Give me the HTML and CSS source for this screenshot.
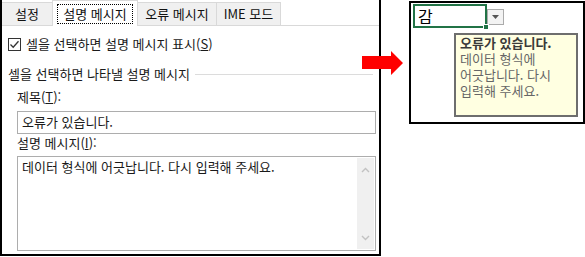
FILE: index.html
```html
<!DOCTYPE html>
<html lang="ko">
<head>
    <meta charset="UTF-8">
    <title>데이터 유효성 - 설명 메시지</title>
    <link rel="stylesheet" href="styles.css">
</head>
<body>
    <div class="page">
        <div class="dialog">
            <div class="tabs">
                <div class="tab tab-1">설정</div>
                <div class="tab tab-2 active"><span class="focus">설명 메시지</span></div>
                <div class="tab tab-3">오류 메시지</div>
                <div class="tab tab-4">IME 모드</div>
            </div>
            <div class="content">
                <label class="check-row">
                    <span class="checkbox">
                        <svg width="11" height="11" viewBox="0 0 11 11"><path d="M1.5 5.5 L4.2 8.2 L9.5 2.2" fill="none" stroke="#333" stroke-width="1.3"/></svg>
                    </span>
                    <span>셀을 선택하면 설명 메시지 표시(<u>S</u>)</span>
                </label>
                <div class="group-title">
                    <span>셀을 선택하면 나타낼 설명 메시지</span>
                    <span class="rule"></span>
                </div>
                <div class="field-label">제목(<u>T</u>):</div>
                <div class="textbox">오류가 있습니다.</div>
                <div class="field-label msg-label">설명 메시지(<u>I</u>):</div>
                <div class="textarea">
                    <div class="textarea-text">데이터 형식에 어긋납니다. 다시 입력해 주세요.</div>
                    <div class="scrollbar">
                        <svg width="9" height="6" viewBox="0 0 9 6"><path d="M1 5 L4.5 1.5 L8 5" fill="none" stroke="#c2c2c2" stroke-width="1.4"/></svg>
                        <svg width="9" height="6" viewBox="0 0 9 6"><path d="M1 1 L4.5 4.5 L8 1" fill="none" stroke="#c2c2c2" stroke-width="1.4"/></svg>
                    </div>
                </div>
            </div>
        </div>

        <svg class="arrow" width="42" height="26" viewBox="0 0 42 26">
            <polygon points="0,5 29,5 29,0 41,12 29,24 29,18 0,18" fill="#ff0000"/>
        </svg>

        <div class="sheet">
            <div class="cell-row">
                <div class="cell">감<span class="handle"></span></div>
                <div class="dropdown">
                    <svg width="7" height="4" viewBox="0 0 7 4"><polygon points="0,0 7,0 3.5,4" fill="#555"/></svg>
                </div>
            </div>
            <div class="tip">
                <div class="tip-title">오류가 있습니다.</div>
                <div class="tip-body">데이터 형식에<br>어긋납니다. 다시<br>입력해 주세요.</div>
            </div>
        </div>
    </div>
</body>
</html>
```

FILE: styles.css
```css
body {
    margin: 0;
    background: #fff;
    font-family: "Noto Sans CJK KR", "Noto Sans", sans-serif;
    font-size: 13px;
    line-height: 16px;
    color: #1a1a1a;
}
.page {
    position: relative;
    display: flex;
    align-items: flex-start;
    width: 585px;
    height: 257px;
}

/* --- 대화상자 --- */
.dialog {
    box-sizing: border-box;
    width: 381px;
    height: 256px;
    border-left: 2px solid #000;
    border-right: 2px solid #000;
    border-bottom: 2px solid #000;
    display: flex;
    flex-direction: column;
}
.tabs {
    display: flex;
    align-items: flex-end;
    height: 25px;
    border-bottom: 1px solid #d9d9d9;
}
.tab {
    box-sizing: border-box;
    height: 23px;
    line-height: 21px;
    text-align: center;
    background: #f0f0f0;
    border: 1px solid #d9d9d9;
    border-bottom: none;
    margin-left: -1px;
    color: #111;
    white-space: nowrap;
}
.tab-1 { width: 51px; margin-left: 0; border-left: none; }
.tab-2 { width: 86px; }
.tab-3 { width: 80px; }
.tab-4 { width: 65px; }
.tab.active {
    height: 26px;
    margin-bottom: -1px;
    background: #fff;
    padding: 3px 4px 0;
    line-height: 17px;
    position: relative;
    z-index: 1;
}
.focus {
    display: block;
    padding: 0 0 1px;
    border: 1px dotted #000;
}
.content {
    display: flex;
    flex-direction: column;
    padding: 10px 4px 0 6px;
}
.check-row {
    display: flex;
    align-items: center;
    gap: 5px;
    height: 16px;
}
.checkbox {
    box-sizing: border-box;
    width: 13px;
    height: 13px;
    border: 1px solid #333;
    display: flex;
    align-items: center;
    justify-content: center;
    background: #fff;
}
.group-title {
    display: flex;
    align-items: center;
    margin-top: 14px;
    height: 16px;
}
.group-title .rule {
    flex: 1;
    height: 1px;
    background: #dcdcdc;
    margin: 1px 2px 0 5px;
}
.field-label {
    margin-top: 7px;
    padding-left: 9px;
    height: 16px;
}
.field-label.msg-label { margin-top: 1px; }
.textbox {
    box-sizing: border-box;
    margin: 6px 0 0 9px;
    width: 359px;
    height: 23px;
    border: 1px solid #adadad;
    padding: 2px 4px;
}
.textarea {
    box-sizing: border-box;
    display: flex;
    margin: 5px 0 0 9px;
    width: 359px;
    height: 95px;
    border: 1px solid #adadad;
}
.textarea-text {
    flex: 1;
    padding: 2px 4px;
}
.scrollbar {
    width: 17px;
    background: #f0f0f0;
    display: flex;
    flex-direction: column;
    justify-content: space-between;
    align-items: center;
    padding: 9px 0 8px;
    margin: 1px 1px 1px 0;
}

/* --- 화살표 --- */
.arrow {
    position: absolute;
    left: 362px;
    top: 51px;
}

/* --- 워크시트 미리보기 --- */
.sheet {
    box-sizing: border-box;
    margin: 1px 0 0 28px;
    width: 176px;
    height: 123px;
    border: 2px solid #000;
    padding: 1px 0 0 2px;
}
.cell-row {
    display: flex;
    align-items: flex-start;
}
.cell {
    position: relative;
    box-sizing: border-box;
    width: 74px;
    height: 24px;
    border: 2px solid #217346;
    padding-left: 3px;
    font-size: 16px;
    line-height: 20px;
    color: #000;
}
.handle {
    position: absolute;
    right: -4px;
    bottom: -4px;
    width: 4px;
    height: 4px;
    background: #217346;
    border: 1px solid #fff;
}
.dropdown {
    box-sizing: border-box;
    margin-top: 5px;
    width: 17px;
    height: 16px;
    border: 1px solid #ababab;
    background: #f3f3f3;
    display: flex;
    align-items: center;
    justify-content: center;
}
.tip {
    box-sizing: border-box;
    margin: 5px 0 0 41px;
    width: 124px;
    height: 84px;
    background: #ffffe1;
    border: 2px solid #6e6e6e;
    padding: 0 4px;
    line-height: 16px;
    white-space: nowrap;
}
.tip-title {
    font-weight: bold;
    color: #3a3a3a;
}
.tip-body {
    color: #666;
}
```
